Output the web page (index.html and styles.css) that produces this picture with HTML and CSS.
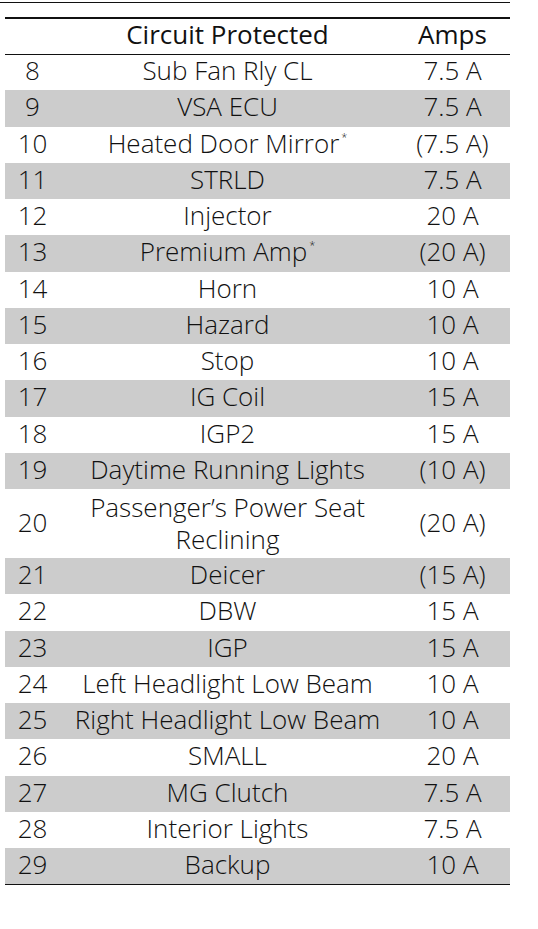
FILE: index.html
```html
<!DOCTYPE html>
<html>
<head>
<meta charset="utf-8">
<link rel="stylesheet" href="styles.css">
</head>
<body>
<div class="rule"></div>
<table class="fuses">
  <thead>
    <tr><th class="num"></th><th class="circ">Circuit Protected</th><th class="amp">Amps</th></tr>
  </thead>
  <tbody>
    <tr><td class="num">8</td><td class="circ">Sub Fan Rly CL</td><td class="amp">7.5 A</td></tr>
    <tr class="alt"><td class="num">9</td><td class="circ">VSA ECU</td><td class="amp">7.5 A</td></tr>
    <tr><td class="num">10</td><td class="circ">Heated Door Mirror<sup>*</sup></td><td class="amp">(7.5 A)</td></tr>
    <tr class="alt"><td class="num">11</td><td class="circ">STRLD</td><td class="amp">7.5 A</td></tr>
    <tr><td class="num">12</td><td class="circ">Injector</td><td class="amp">20 A</td></tr>
    <tr class="alt"><td class="num">13</td><td class="circ">Premium Amp<sup>*</sup></td><td class="amp">(20 A)</td></tr>
    <tr><td class="num">14</td><td class="circ">Horn</td><td class="amp">10 A</td></tr>
    <tr class="alt"><td class="num">15</td><td class="circ">Hazard</td><td class="amp">10 A</td></tr>
    <tr><td class="num">16</td><td class="circ">Stop</td><td class="amp">10 A</td></tr>
    <tr class="alt"><td class="num">17</td><td class="circ">IG Coil</td><td class="amp">15 A</td></tr>
    <tr><td class="num">18</td><td class="circ">IGP2</td><td class="amp">15 A</td></tr>
    <tr class="alt"><td class="num">19</td><td class="circ">Daytime Running Lights</td><td class="amp">(10 A)</td></tr>
    <tr class="tall"><td class="num">20</td><td class="circ two"><span class="line">Passenger’s Power Seat</span><span class="line">Reclining</span></td><td class="amp">(20 A)</td></tr>
    <tr class="alt"><td class="num">21</td><td class="circ">Deicer</td><td class="amp">(15 A)</td></tr>
    <tr><td class="num">22</td><td class="circ">DBW</td><td class="amp">15 A</td></tr>
    <tr class="alt"><td class="num">23</td><td class="circ">IGP</td><td class="amp">15 A</td></tr>
    <tr><td class="num">24</td><td class="circ">Left Headlight Low Beam</td><td class="amp">10 A</td></tr>
    <tr class="alt"><td class="num">25</td><td class="circ">Right Headlight Low Beam</td><td class="amp">10 A</td></tr>
    <tr><td class="num">26</td><td class="circ">SMALL</td><td class="amp">20 A</td></tr>
    <tr class="alt"><td class="num">27</td><td class="circ">MG Clutch</td><td class="amp">7.5 A</td></tr>
    <tr><td class="num">28</td><td class="circ">Interior Lights</td><td class="amp">7.5 A</td></tr>
    <tr class="alt"><td class="num">29</td><td class="circ">Backup</td><td class="amp">10 A</td></tr>
  </tbody>
</table>
</body>
</html>
```

FILE: styles.css
```css
html, body {
  margin: 0;
  padding: 0;
  background: #ffffff;
}
body {
  font-family: "Open Sans", "Noto Sans", sans-serif;
  color: #111111;
  font-size: 26px;
}
.rule {
  width: 510px;
  height: 0;
  margin-top: 2px;
  border-top: 1px solid #111111;
}
.fuses {
  margin-top: 14px;
  margin-left: 5px;
  width: 505px;
  border-collapse: collapse;
  table-layout: fixed;
  border-top: 2px solid #111111;
  border-bottom: 1px solid #111111;
}
.fuses th, .fuses td {
  padding: 0 0 3px 0;
  text-align: center;
  vertical-align: middle;
  font-weight: 300;
  line-height: 31px;
  white-space: nowrap;
}
.fuses th {
  font-weight: 400;
}
.fuses thead tr {
  height: 36px;
  border-bottom: 1px solid #111111;
}
.fuses tbody tr {
  height: 36.25px;
}
.fuses tbody tr.tall {
  height: 69px;
}
.fuses tr.alt {
  background: #cccccc;
}
.fuses td.two {
  padding-bottom: 1px;
}
.line {
  display: block;
  line-height: 32px;
}
.num { width: 55px; }
.circ { width: 335px; }
.amp { width: 115px; }
sup {
  font-size: 11px;
  line-height: 0;
  vertical-align: 12px;
  margin-left: 2px;
}
```
